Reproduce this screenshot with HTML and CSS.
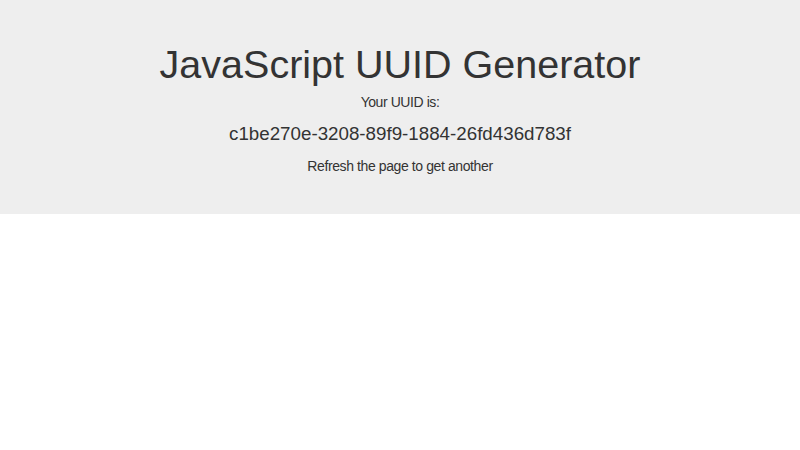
FILE: index.html
```html
<!DOCTYPE html>
<html>
<head>
<meta charset="utf-8">
<title>JavaScript UUID Generator</title>
<link rel="stylesheet" href="styles.css">
</head>
<body>
<div class="jumbotron">
  <h1 class="title">JavaScript UUID Generator</h1>
  <p class="label">Your UUID is:</p>
  <p class="uuid">c1be270e-3208-89f9-1884-26fd436d783f</p>
  <p class="hint">Refresh the page to get another</p>
</div>
</body>
</html>
```
FILE: styles.css
```css
html, body {
  margin: 0;
  padding: 0;
  background: #fff;
}
body {
  font-family: "Liberation Sans", Arial, sans-serif;
  color: #333;
  font-size: 14px;
}
.jumbotron {
  background: #eee;
  height: 214px;
  box-sizing: border-box;
  padding-top: 40px;
  text-align: center;
}
.title {
  font-size: 39.5px;
  font-weight: normal;
  line-height: 48px;
  margin: 0 0 5px;
}
.label {
  margin: 0;
  line-height: 18px;
  font-size: 14px;
  letter-spacing: -0.43px;
}
.uuid {
  font-size: 18.75px;
  margin: 10.5px 0 11.5px;
  line-height: 24px;
}
.hint {
  margin: 0;
  line-height: 18px;
  font-size: 14px;
  letter-spacing: -0.4px;
}
```
